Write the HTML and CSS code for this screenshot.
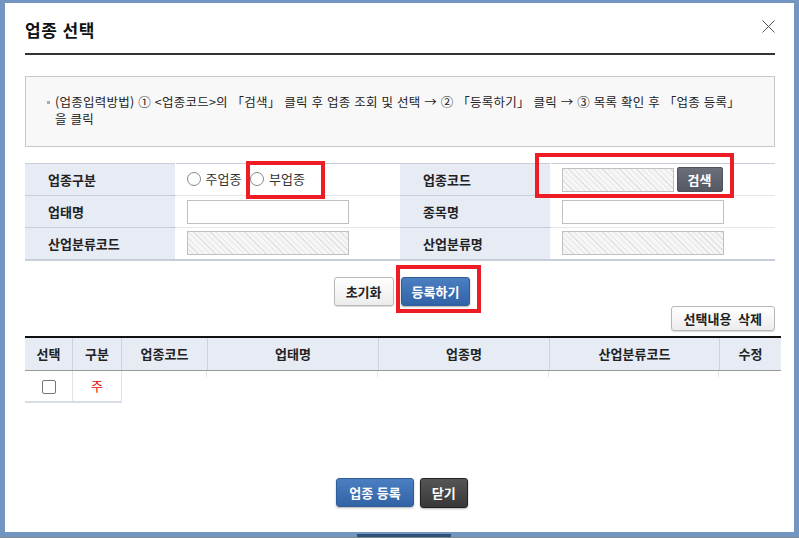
FILE: index.html
```
<!DOCTYPE html>
<html lang="ko">
<head>
    <meta charset="UTF-8">
    <meta name="viewport" content="width=device-width, initial-scale=1.0">
    <title>업종 선택</title>
    <link rel="stylesheet" href="styles.css">
</head>
<body>
    <div class="modal">
        <div class="modal-head">
            <h2>업종 선택</h2>
            <span class="close">
                <svg width="13" height="13" viewBox="0 0 13 13"><path d="M0.5 0.5 L12.5 12.5 M12.5 0.5 L0.5 12.5" stroke="#556" stroke-width="1" fill="none"/></svg>
            </span>
        </div>

        <div class="guide">
            <p><span class="dot"></span>(업종입력방법) ① &lt;업종코드&gt;의 「검색」 클릭 후 업종 조회 및 선택 → ② 「등록하기」 클릭 → ③ 목록 확인 후 「업종 등록」 을 클릭</p>
        </div>

        <table class="form-table">
            <tr>
                <th>업종구분</th>
                <td>
                    <label class="radio"><span class="circle"></span>주업종</label>
                    <label class="radio"><span class="circle"></span>부업종</label>
                </td>
                <th>업종코드</th>
                <td>
                    <span class="input disabled short"></span><button class="btn-dark">검색</button>
                </td>
            </tr>
            <tr>
                <th>업태명</th>
                <td><span class="input"></span></td>
                <th>종목명</th>
                <td><span class="input"></span></td>
            </tr>
            <tr>
                <th>산업분류코드</th>
                <td><span class="input disabled"></span></td>
                <th>산업분류명</th>
                <td><span class="input disabled"></span></td>
            </tr>
        </table>

        <div class="btn-row">
            <button class="btn-white">초기화</button>
            <button class="btn-blue">등록하기</button>
        </div>

        <div class="del-row">
            <button class="btn-white small">선택내용 삭제</button>
        </div>

        <table class="list-table">
            <thead>
                <tr>
                    <th class="c1">선택</th>
                    <th class="c2">구분</th>
                    <th class="c3">업종코드</th>
                    <th class="c4">업태명</th>
                    <th class="c5">업종명</th>
                    <th class="c6">산업분류코드</th>
                    <th class="c7">수정</th>
                </tr>
            </thead>
            <tbody>
                <tr>
                    <td class="cell"><span class="check"></span></td>
                    <td class="cell red">주</td>
                    <td class="stub"></td>
                    <td class="stub"></td>
                    <td class="stub"></td>
                    <td class="stub"></td>
                    <td></td>
                </tr>
            </tbody>
        </table>

        <div class="footer-btns">
            <button class="btn-blue wide">업종 등록</button>
            <button class="btn-black">닫기</button>
        </div>

        <!-- 안내용 빨간 표시 -->
        <div class="mark mark1"></div>
        <div class="mark mark2"></div>
        <div class="mark mark3"></div>
    </div>
    <div class="bottom-bar"></div>
</body>
</html>
```

FILE: styles.css
```
body {
    margin: 0;
    background-color: #7296c1;
    font-family: "Noto Sans CJK KR", "Noto Sans", sans-serif;
    font-size: 13px;
    color: #333;
    height: 538px;
    overflow: hidden;
    border-bottom: 1px solid #888;
    box-sizing: border-box;
}
.modal {
    position: relative; /* 표시 박스 기준 */
    background-color: #fff;
    margin: 3px 5px 0 5px;
    height: 529px;
    padding: 0 19px 0 20px;
    box-sizing: border-box;
    display: flex;
    flex-direction: column;
}
.modal-head {
    display: flex;
    justify-content: space-between;
    align-items: center;
    height: 50px;
    border-bottom: 2px solid #333;
}
.modal-head h2 {
    margin: 2px 0 0;
    font-size: 17px;
    font-weight: bold;
    color: #111;
    letter-spacing: 0.5px;
}
.close {
    display: flex;
    margin-top: -4px;
}
.guide {
    margin-top: 21px;
    height: 71px;
    background-color: #f8f8f8;
    border: 1px solid #c8c8c8;
    box-sizing: border-box;
    padding: 16px 20px 0 29px;
}
.guide p {
    margin: 0;
    font-size: 12.5px;
    letter-spacing: 0.25px;
    line-height: 17px;
    color: #222;
    word-break: keep-all;
}
.dot {
    display: inline-block;
    width: 3px;
    height: 3px;
    background-color: #aaa;
    margin: 0 5px 3px -8px;
    vertical-align: middle;
}
.form-table {
    margin-top: 16px;
    width: 100%;
    border-collapse: collapse;
    border-top: 1px solid #c8ced8;
    border-bottom: 2px solid #c8ced8;
}
.form-table tr {
    height: 32px;
}
.form-table th {
    width: 150px;
    background-color: #e6ebf4;
    text-align: left;
    padding: 0 0 0 23px;
    font-weight: bold;
    color: #222;
    border-bottom: 1px solid #c8ced8;
    box-sizing: border-box;
}
.form-table td {
    padding: 0 0 0 11px;
    border-bottom: 1px solid #e4e6ea;
    border-left: 1px solid #fff;
}
.form-table tr:last-child th,
.form-table tr:last-child td {
    border-bottom: none;
}
.radio {
    display: inline-flex;
    align-items: center;
    gap: 5px;
    margin-right: 5px;
    color: #333;
}
.circle {
    display: inline-block;
    width: 12px;
    height: 12px;
    border: 1px solid #888;
    border-radius: 50%;
    background-color: #fff;
}
.input {
    display: inline-block;
    vertical-align: middle;
    width: 162px;
    height: 24px;
    border: 1px solid #c0c0c0;
    box-sizing: border-box;
    background-color: #fff;
}
.input.disabled {
    background-color: #f4f4f4;
    background-image: repeating-linear-gradient(45deg, #f6f6f6 0 3px, #e2e2e2 3px 4px);
}
.input.short {
    width: 112px;
}
button {
    font-family: inherit;
    font-weight: bold;
    font-size: 13px;
    cursor: pointer;
}
.btn-dark {
    vertical-align: middle;
    margin-left: 3px;
    height: 25px;
    width: 46px;
    padding: 0;
    color: #fff;
    border: 1px solid #4d525c;
    border-radius: 2px;
    background: linear-gradient(#6a6f7a, #535862);
}
.btn-row {
    margin-top: 16px;
    display: flex;
    justify-content: center;
    gap: 7px;
    padding-left: 4px;
}
.btn-white {
    height: 29px;
    padding: 0 11px;
    color: #222;
    background: linear-gradient(#ffffff, #ececec);
    border: 1px solid #b8b8b8;
    border-radius: 3px;
    box-shadow: 0 1px 1px rgba(0, 0, 0, 0.15);
}
.btn-white.small {
    height: 25px;
    padding: 0 12px;
    word-spacing: 3px;
}
.btn-blue {
    height: 29px;
    padding: 0 10px;
    color: #fff;
    background: linear-gradient(#4b7fc2, #3163a5);
    border: 1px solid #2f5d9a;
    border-radius: 3px;
    box-shadow: 0 1px 2px rgba(0, 0, 0, 0.3);
}
.btn-blue.wide {
    padding: 0 12px;
}
.btn-black {
    height: 30px;
    padding: 0 11px;
    color: #fff;
    background: linear-gradient(#555, #383838);
    border: 1px solid #222;
    border-radius: 3px;
    box-shadow: 0 1px 2px rgba(0, 0, 0, 0.3);
}
.del-row {
    display: flex;
    justify-content: flex-end;
    margin-top: 0;
}
.list-table {
    margin-top: 5px;
    width: 100%;
    table-layout: fixed;
    border-collapse: collapse;
    border-top: 2px solid #111;
}
.list-table th {
    height: 32px;
    background-color: #e6ebf4;
    font-weight: bold;
    color: #222;
    border-left: 1px solid #ccd3de;
    border-bottom: 1px solid #999;
    padding: 0;
}
.list-table th:first-child {
    border-left: none;
}
.c1 { width: 47px; }
.c2 { width: 48px; }
.c3 { width: 85px; }
.c4 { width: 170px; }
.c5 { width: 170px; }
.c6 { width: 169px; }
.c7 { width: 61px; }
.list-table td {
    height: 30px;
    padding: 0;
    text-align: center;
}
.list-table td.cell {
    border-right: 1px solid #dfe3ea;
    border-bottom: 2px solid #d7dce6;
}
.list-table td.stub {
    border-right: 1px solid #fff;
    background: linear-gradient(to left, #e4e8ee 1px, transparent 1px) right top / 100% 6px no-repeat;
}
.list-table td.red {
    color: #e00;
}
.check {
    display: inline-block;
    width: 12px;
    height: 12px;
    border: 1px solid #777;
    border-radius: 2px;
    vertical-align: middle;
}
.footer-btns {
    margin-top: 75px;
    display: flex;
    justify-content: center;
    gap: 6px;
    padding-left: 4px;
}
/* 빨간 표시 박스 */
.mark {
    position: absolute;
    border: 4px solid #ee1c25;
    box-sizing: border-box;
}
.mark1 { left: 241px; top: 158px; width: 79px; height: 38px; }
.mark2 { left: 530px; top: 150px; width: 199px; height: 45px; }
.mark3 { left: 391px; top: 262px; width: 85px; height: 48px; }
.bottom-bar {
    width: 94px;
    height: 4px;
    margin: 2px 0 0 357px;
    background-color: #2e4f78;
}
```
